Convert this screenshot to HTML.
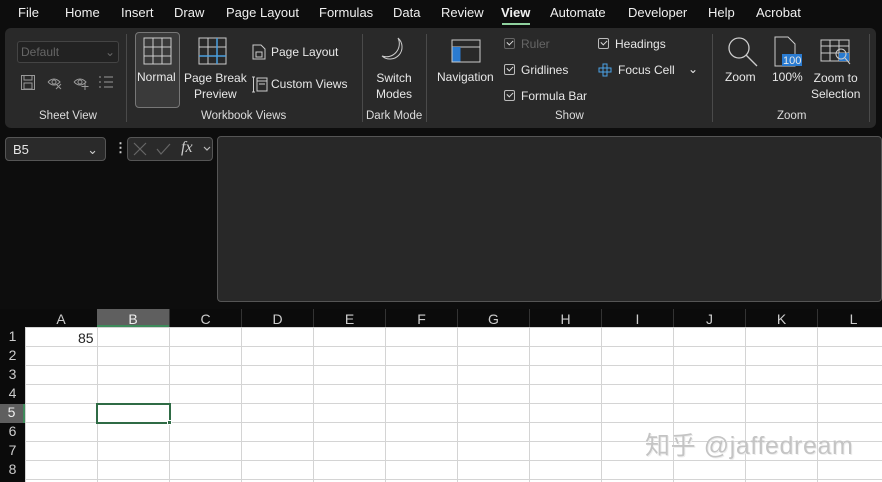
<!DOCTYPE html>
<html><head><meta charset="utf-8"><style>
*{margin:0;padding:0;box-sizing:border-box}
body{width:882px;height:482px;overflow:hidden;background:#0d0d0d;font-family:"Liberation Sans","Noto Sans CJK SC",sans-serif;color:#e6e6e6;position:relative;font-size:12px}
.a{position:absolute;white-space:nowrap}
.m{top:5px;font-size:13px;color:#f0f0f0}
.rib{position:absolute;left:5px;top:28px;width:871px;height:100px;background:#292929;border-radius:6px}
.sep{position:absolute;top:34px;width:1px;height:88px;background:#4a4a4a}
.gl{top:110px;font-size:11.5px;color:#ddd}
.t{font-size:12px;color:#e8e8e8}
.cb{position:absolute;width:11px;height:11px;border:1px solid #bbb;border-radius:2px}
.cb:after{content:"";position:absolute;left:2px;top:1px;width:5px;height:3px;border-left:1.3px solid #ddd;border-bottom:1.3px solid #ddd;transform:rotate(-45deg)}
.grid{position:absolute;left:0;top:309px;width:882px;height:173px}
.ch{position:absolute;top:0;height:18px;background:#0b0b0b;color:#ccc;font-size:14px;text-align:center;line-height:20px}
.rh{position:absolute;left:0;width:25px;background:#0b0b0b;color:#ccc;font-size:14px;text-align:center}
</style></head><body>
<div class="a m" style="left:18px">File</div>
<div class="a m" style="left:65px">Home</div>
<div class="a m" style="left:121px">Insert</div>
<div class="a m" style="left:174px">Draw</div>
<div class="a m" style="left:226px">Page Layout</div>
<div class="a m" style="left:319px">Formulas</div>
<div class="a m" style="left:393px">Data</div>
<div class="a m" style="left:441px">Review</div>
<div class="a m" style="left:501px;font-weight:bold">View</div>
<div class="a" style="left:502px;top:23px;width:28px;height:2px;background:#8fd19e"></div>
<div class="a m" style="left:550px">Automate</div>
<div class="a m" style="left:628px">Developer</div>
<div class="a m" style="left:708px">Help</div>
<div class="a m" style="left:756px">Acrobat</div>

<div class="rib"></div>
<div class="a" style="left:17px;top:41px;width:102px;height:22px;border:1px solid #444;border-radius:3px;background:#222;color:#666;padding:3px 3px;font-size:12px">Default<span style="float:right">⌄</span></div>
<svg class="a" style="left:20px;top:74px" width="100" height="18" stroke="#999" fill="none" stroke-width="1"><rect x="1.5" y="1.5" width="13" height="14"/><rect x="4" y="9" width="8" height="6"/><path d="M4 2v4h8V2"/><path d="M28 8q6-6 12 0q-6 6-12 0M36 10l5 5M41 10l-5 5"/><circle cx="34" cy="8" r="2"/><path d="M54 8q6-6 12 0q-6 6-12 0M65 9v7M61.5 12.5h7"/><circle cx="60" cy="8" r="2"/><path d="M79 3h2M79 8h2M79 13h2M84 3h9M84 8h9M84 13h9"/></svg>
<div class="a gl" style="left:39px">Sheet View</div>
<div class="sep" style="left:126px"></div>
<div class="a" style="left:135px;top:32px;width:45px;height:76px;border:1px solid #777;border-radius:4px;background:#3a3a3a"></div>
<svg class="a" style="left:143px;top:37px" width="29" height="28" stroke="#ccc" fill="none"><rect x="1" y="1" width="27" height="26"/><path d="M10 1v26M19 1v26M1 10h27M1 19h27"/></svg>
<div class="a t" style="left:137px;top:70px">Normal</div>
<svg class="a" style="left:198px;top:37px" width="29" height="28" stroke="#ccc" fill="none"><rect x="1" y="1" width="27" height="26"/><path d="M10 1v26M1 10h27M1 19h27"/><path d="M19 1v26M1 19h27" stroke="#4a9fe0" stroke-width="1.5"/></svg>
<div class="a t" style="left:184px;top:70px;text-align:center;line-height:16px">Page Break<br>Preview</div>
<svg class="a" style="left:252px;top:44px" width="14" height="16" stroke="#ccc" fill="none"><path d="M1 1h8l4 4v10H1z"/><rect x="4" y="8" width="6" height="5"/></svg>
<div class="a t" style="left:271px;top:45px">Page Layout</div>
<svg class="a" style="left:251px;top:76px" width="17" height="17" stroke="#ccc" fill="none"><path d="M1 1h3M1 16h3M2.5 1v15"/><rect x="6" y="2" width="10" height="13"/><path d="M6 5h10M8 8h6"/></svg>
<div class="a t" style="left:271px;top:77px">Custom Views</div>
<div class="a gl" style="left:201px">Workbook Views</div>
<div class="sep" style="left:362px"></div>
<svg class="a" style="left:380px;top:36px" width="30" height="30" fill="none" stroke="#ccc"><path d="M18 2a12 12 0 1 1-16 18a13 13 0 0 0 16-18z"/></svg>
<div class="a t" style="left:376px;top:70px;text-align:center;line-height:16px">Switch<br>Modes</div>
<div class="a gl" style="left:366px">Dark Mode</div>
<div class="sep" style="left:426px"></div>
<svg class="a" style="left:451px;top:39px" width="30" height="24"><rect x="1" y="1" width="28" height="22" fill="none" stroke="#ccc"/><path d="M1 8h28" stroke="#ccc"/><rect x="1.5" y="8" width="8" height="14.5" fill="#2a7bd1"/></svg>
<div class="a t" style="left:437px;top:70px">Navigation</div>
<div class="cb" style="left:504px;top:38px;border-color:#666"></div>
<div class="a t" style="left:521px;top:37px;color:#666">Ruler</div>
<div class="cb" style="left:504px;top:64px"></div>
<div class="a t" style="left:521px;top:63px">Gridlines</div>
<div class="cb" style="left:504px;top:90px"></div>
<div class="a t" style="left:521px;top:89px">Formula Bar</div>
<div class="cb" style="left:598px;top:38px"></div>
<div class="a t" style="left:615px;top:37px">Headings</div>
<svg class="a" style="left:598px;top:63px" width="14" height="14" fill="none" stroke="#4aa3e8"><path d="M5 1h4v4h4v4H9v4H5V9H1V5h4z"/><path d="M5 5h4v4H5z"/></svg>
<div class="a t" style="left:618px;top:63px">Focus Cell</div>
<div class="a t" style="left:688px;top:62px">⌄</div>
<div class="a gl" style="left:555px">Show</div>
<div class="sep" style="left:712px"></div>
<svg class="a" style="left:727px;top:36px" width="32" height="32" fill="none" stroke="#ccc" stroke-width="1.3"><circle cx="12" cy="12" r="10"/><path d="M19 19l11 11"/></svg>
<div class="a t" style="left:725px;top:70px">Zoom</div>
<svg class="a" style="left:774px;top:36px" width="30" height="32"><path d="M1 1h13l7 7v22H1z" fill="none" stroke="#ccc"/><rect x="8" y="18" width="20" height="12" fill="#2a7bd1"/><text x="9" y="28" font-size="11" fill="#e8e8e8" font-family="Liberation Sans">100</text></svg>
<div class="a t" style="left:772px;top:70px">100%</div>
<svg class="a" style="left:820px;top:39px" width="32" height="28" fill="none" stroke="#ccc"><rect x="1" y="1" width="28" height="21"/><path d="M1 7h28M10 1v21M19 1v21M1 14h28"/><rect x="19" y="14" width="10" height="8" fill="#2a7bd1" stroke="none"/><circle cx="21" cy="15" r="5"/><path d="M25 19l5 6"/></svg>
<div class="a t" style="left:811px;top:70px;text-align:center;line-height:16px">Zoom to<br>Selection</div>
<div class="a gl" style="left:777px">Zoom</div>
<div class="sep" style="left:869px"></div>

<div class="a" style="left:5px;top:137px;width:101px;height:24px;border:1px solid #555;border-radius:4px;background:#2a2a2a;padding:4px 7px;font-size:13px">B5<span style="float:right;color:#ccc">⌄</span></div>
<div class="a" style="left:114px;top:140px;color:#ccc;font-size:13px;font-weight:bold">⋮</div>
<div class="a" style="left:127px;top:137px;width:86px;height:24px;border:1px solid #555;border-radius:4px;background:#2a2a2a"></div>
<svg class="a" style="left:132px;top:141px" width="80" height="16" fill="none" stroke="#666" stroke-width="1.2"><path d="M2 2l12 12M14 2L2 14M25 8l4 5l9-10"/><path d="M72 6l3 3l3-3" stroke="#bbb"/></svg>
<div class="a" style="left:181px;top:139px;font-family:'Liberation Serif',serif;font-style:italic;font-size:16px;color:#ccc">fx</div>
<div class="a" style="left:217px;top:136px;width:665px;height:166px;border:1px solid #555;border-radius:4px;background:#282828"></div>

<div class="grid">
<div class="a" style="left:0;top:0;width:882px;height:173px;background:#fff;
background-image:linear-gradient(#d4d4d4 1px,transparent 1px),linear-gradient(90deg,#d4d4d4 1px,transparent 1px);
background-size:72px 19px;background-position:25px 18px,25px 0"></div>
<div class="a" style="left:0;top:0;width:882px;height:18px;background:#0b0b0b"></div>
<div class="ch" style="left:25px;width:72px">A</div>
<div class="ch" style="left:97px;width:72px;background:#5f5f5f;border-bottom:2px solid #3d8a5a;color:#eee">B</div>
<div class="ch" style="left:169px;width:72px;border-left:1px solid #333">C</div>
<div class="ch" style="left:241px;width:72px;border-left:1px solid #333">D</div>
<div class="ch" style="left:313px;width:72px;border-left:1px solid #333">E</div>
<div class="ch" style="left:385px;width:72px;border-left:1px solid #333">F</div>
<div class="ch" style="left:457px;width:72px;border-left:1px solid #333">G</div>
<div class="ch" style="left:529px;width:72px;border-left:1px solid #333">H</div>
<div class="ch" style="left:601px;width:72px;border-left:1px solid #333">I</div>
<div class="ch" style="left:673px;width:72px;border-left:1px solid #333">J</div>
<div class="ch" style="left:745px;width:72px;border-left:1px solid #333">K</div>
<div class="ch" style="left:817px;width:72px;border-left:1px solid #333">L</div>
<div class="rh" style="top:18px;height:155px"></div>
<div class="rh" style="top:19px;height:19px">1</div>
<div class="rh" style="top:38px;height:19px">2</div>
<div class="rh" style="top:57px;height:19px">3</div>
<div class="rh" style="top:76px;height:19px">4</div>
<div class="rh" style="top:95px;height:19px;background:#5f5f5f;border-right:2px solid #3d8a5a;color:#eee">5</div>
<div class="rh" style="top:114px;height:19px">6</div>
<div class="rh" style="top:133px;height:19px">7</div>
<div class="rh" style="top:152px;height:19px">8</div>
<div class="a" style="left:78px;top:21px;color:#222;font-size:14px">85</div>
<div class="a" style="left:96px;top:94px;width:75px;height:21px;border:2px solid #2f6b45"></div>
<div class="a" style="left:167px;top:111px;width:5px;height:5px;background:#2f6b45;border:1px solid #fff"></div>
<div class="a" style="left:645px;top:117px;font-size:25px;letter-spacing:0.6px;color:#c4c4c4;text-shadow:1px 1px 0 #eee">知乎 @jaffedream</div>
</div>
</body></html>
